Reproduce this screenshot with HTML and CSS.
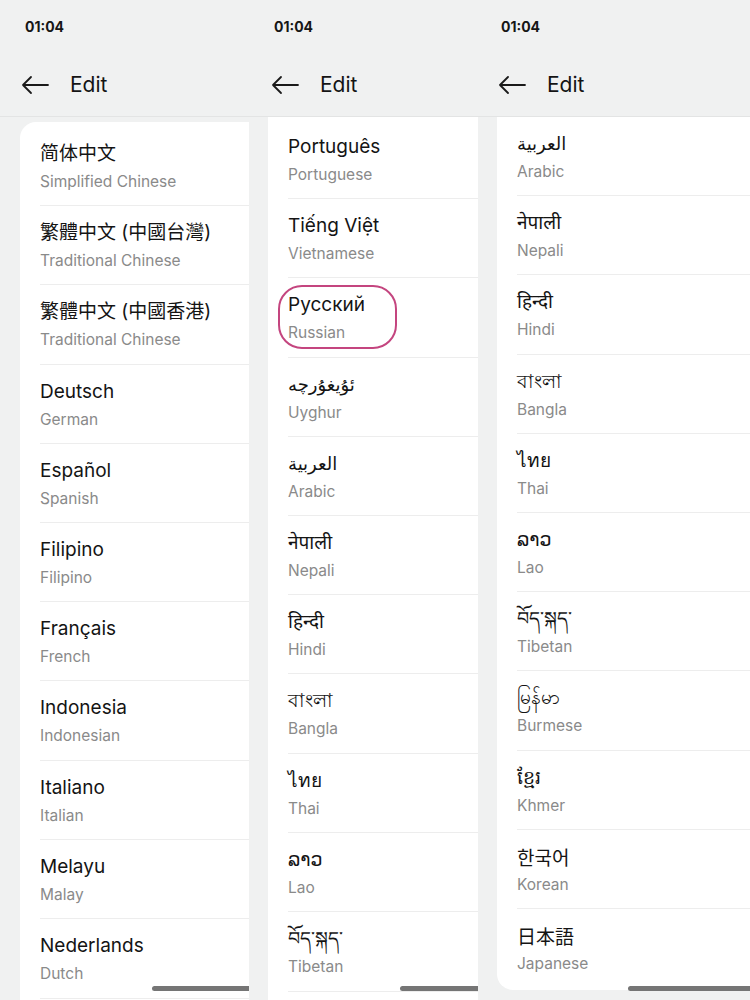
FILE: index.html
```html
<!DOCTYPE html>
<html lang="en">
<head>
  <meta charset="UTF-8" />
  <meta name="viewport" content="width=device-width, initial-scale=1.0"/>
  <title>Language - Edit</title>
  <link rel="stylesheet" href="styles.css">
</head>
<body>
  <div class="screens">

    <!-- first screen: top of the list -->
    <div class="screen screen-a">
      <div class="status">01:04</div>
      <div class="appbar">
        <svg class="back" width="28" height="20" viewBox="0 0 28 20"><path d="M27 10H2M10 2L2 10l8 8" fill="none" stroke="#1a1a1a" stroke-width="1.8" stroke-linecap="round" stroke-linejoin="round"/></svg>
        <span class="title">Edit</span>
      </div>
      <div class="list rounded-top first open-end">
        <div class="row"><div class="name" lang="zh-CN">简体中文</div><div class="sub">Simplified Chinese</div></div>
        <div class="row"><div class="name" lang="zh-TW">繁體中文 (中國台灣)</div><div class="sub">Traditional Chinese</div></div>
        <div class="row"><div class="name" lang="zh-HK">繁體中文 (中國香港)</div><div class="sub">Traditional Chinese</div></div>
        <div class="row"><div class="name">Deutsch</div><div class="sub">German</div></div>
        <div class="row"><div class="name">Español</div><div class="sub">Spanish</div></div>
        <div class="row"><div class="name">Filipino</div><div class="sub">Filipino</div></div>
        <div class="row"><div class="name">Français</div><div class="sub">French</div></div>
        <div class="row"><div class="name">Indonesia</div><div class="sub">Indonesian</div></div>
        <div class="row"><div class="name">Italiano</div><div class="sub">Italian</div></div>
        <div class="row"><div class="name">Melayu</div><div class="sub">Malay</div></div>
        <div class="row"><div class="name">Nederlands</div><div class="sub">Dutch</div></div>
      </div>
      <div class="home-bar"></div>
    </div>

    <!-- second screen: scrolled to the middle -->
    <div class="screen screen-b">
      <div class="status">01:04</div>
      <div class="appbar">
        <svg class="back" width="28" height="20" viewBox="0 0 28 20"><path d="M27 10H2M10 2L2 10l8 8" fill="none" stroke="#1a1a1a" stroke-width="1.8" stroke-linecap="round" stroke-linejoin="round"/></svg>
        <span class="title">Edit</span>
      </div>
      <div class="list mid open-end">
        <div class="row"><div class="name">Português</div><div class="sub">Portuguese</div></div>
        <div class="row"><div class="name">Tiếng Việt</div><div class="sub">Vietnamese</div></div>
        <div class="row picked"><div class="name">Русский</div><div class="sub">Russian</div><span class="ring"></span></div>
        <div class="row"><div class="name" lang="ug">ئۇيغۇرچە</div><div class="sub">Uyghur</div></div>
        <div class="row"><div class="name" lang="ar">العربية</div><div class="sub">Arabic</div></div>
        <div class="row"><div class="name" lang="ne">नेपाली</div><div class="sub">Nepali</div></div>
        <div class="row"><div class="name" lang="hi">हिन्दी</div><div class="sub">Hindi</div></div>
        <div class="row"><div class="name" lang="bn">বাংলা</div><div class="sub">Bangla</div></div>
        <div class="row"><div class="name" lang="th">ไทย</div><div class="sub">Thai</div></div>
        <div class="row"><div class="name" lang="lo">ລາວ</div><div class="sub">Lao</div></div>
        <div class="row"><div class="name" lang="bo">བོད་སྐད་</div><div class="sub">Tibetan</div></div>
      </div>
      <div class="home-bar"></div>
    </div>

    <!-- third screen: end of the list -->
    <div class="screen screen-c">
      <div class="status">01:04</div>
      <div class="appbar">
        <svg class="back" width="28" height="20" viewBox="0 0 28 20"><path d="M27 10H2M10 2L2 10l8 8" fill="none" stroke="#1a1a1a" stroke-width="1.8" stroke-linecap="round" stroke-linejoin="round"/></svg>
        <span class="title">Edit</span>
      </div>
      <div class="list rounded-bottom">
        <div class="row"><div class="name" lang="ar">العربية</div><div class="sub">Arabic</div></div>
        <div class="row"><div class="name" lang="ne">नेपाली</div><div class="sub">Nepali</div></div>
        <div class="row"><div class="name" lang="hi">हिन्दी</div><div class="sub">Hindi</div></div>
        <div class="row"><div class="name" lang="bn">বাংলা</div><div class="sub">Bangla</div></div>
        <div class="row"><div class="name" lang="th">ไทย</div><div class="sub">Thai</div></div>
        <div class="row"><div class="name" lang="lo">ລາວ</div><div class="sub">Lao</div></div>
        <div class="row"><div class="name" lang="bo">བོད་སྐད་</div><div class="sub">Tibetan</div></div>
        <div class="row"><div class="name" lang="my">မြန်မာ</div><div class="sub">Burmese</div></div>
        <div class="row"><div class="name" lang="km">ខ្មែរ</div><div class="sub">Khmer</div></div>
        <div class="row"><div class="name" lang="ko">한국어</div><div class="sub">Korean</div></div>
        <div class="row"><div class="name" lang="ja">日本語</div><div class="sub">Japanese</div></div>
      </div>
      <div class="home-bar"></div>
    </div>

  </div>
</body>
</html>
```

FILE: styles.css
```css
body {
  margin: 0;
  padding: 0;
  background: #f0f1f1;
  font-family: Inter, "Noto Sans", "DejaVu Sans", sans-serif;
  color: #141414;
  overflow: hidden;
}

.screens {
  display: flex;
  height: 1000px;
}

.screen {
  position: relative;
  height: 1000px;
  overflow: hidden;
  background: #f0f1f1;
}
.screen-a { width: 249px; }
.screen-b { width: 229px; }
.screen-c { width: 272px; }

.status {
  height: 54px;
  padding: 18px 0 0 25px;
  box-sizing: border-box;
  font-size: 14px;
  line-height: 18px;
  font-weight: 700;
  color: #161616;
}
.screen-c .status { padding-left: 23px; }

.appbar {
  display: flex;
  align-items: center;
  height: 61px;
  padding-bottom: 1px;
  border-bottom: 1px solid #e3e4e4;
}
.screen-a .appbar { padding-left: 21px; }
.screen-b .appbar { padding-left: 22px; }
.screen-c .appbar { padding-left: 20px; }

.back {
  display: block;
}

.title {
  margin-left: 21px;
  font-size: 21px;
  color: #141414;
}

.list {
  background: #fff;
  margin-left: 20px;
}
.screen-b .list, .screen-c .list { margin-left: 19px; }

.list.first { margin-top: 5px; padding-top: 5px; }
.list.mid { padding-top: 3px; }

.rounded-top { border-top-left-radius: 16px; }
.rounded-bottom {
  border-bottom-left-radius: 16px;
  padding-bottom: 3px;
}

.row {
  position: relative;
  margin-left: 20px;
  padding: 14px 0 12.2px;
  border-top: 1px solid #ededed;
  white-space: nowrap;
}
.row:first-child { border-top: none; }

/* the list keeps going below the screen edge */
.open-end { padding-bottom: 30px; }
.open-end .row:last-child {
  border-bottom: 1px solid #ededed;
  padding-bottom: 13px;
}

.name {
  font-size: 19px;
  line-height: 26px;
  color: #141414;
}
.name:lang(zh-CN) { font-family: Inter, "Noto Sans CJK SC", sans-serif; }
.name:lang(zh-TW), .name:lang(zh-HK) { font-family: Inter, "Noto Sans CJK TC", sans-serif; }
.name:lang(ko) { font-family: "Noto Sans CJK KR", sans-serif; }
.name:lang(ja) { font-family: "Noto Sans CJK JP", sans-serif; }
.name:lang(ar), .name:lang(ug) { font-size: 18px; }

.sub {
  margin-top: 4px;
  font-size: 15.5px;
  line-height: 22px;
  color: #8a8a8a;
}

/* pink outline drawn around the chosen language */
.ring {
  position: absolute;
  left: -10px;
  top: 7px;
  width: 119px;
  height: 64px;
  border: 2px solid #c4457f;
  border-radius: 24px;
  box-sizing: border-box;
}

.home-bar {
  position: absolute;
  top: 986px;
  height: 5px;
  background: #757575;
  border-radius: 3px;
}
.screen-a .home-bar { left: 152px; width: 140px; }
.screen-b .home-bar { left: 151px; width: 140px; }
.screen-c .home-bar { left: 150px; width: 140px; }
```
